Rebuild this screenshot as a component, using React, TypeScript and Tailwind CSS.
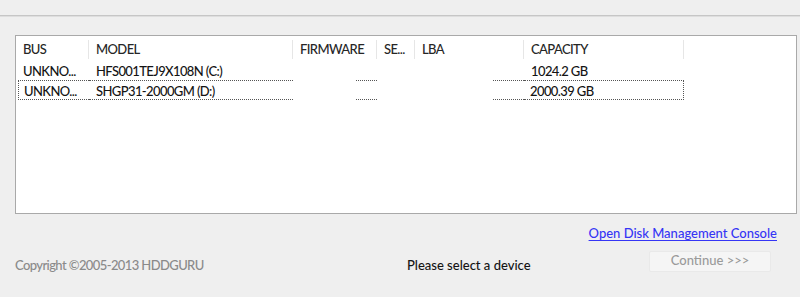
import React from "react";

const cols = [
  { name: "BUS", w: 73 },
  { name: "MODEL", w: 204 },
  { name: "FIRMWARE", w: 84 },
  { name: "SE...", w: 38 },
  { name: "LBA", w: 109 },
  { name: "CAPACITY", w: 160 },
];

export default function App() {
  return (
    <div
      className="w-[800px] h-[297px] bg-[#efefef] overflow-hidden text-[13px] font-medium text-[#141414]"
      style={{ fontFamily: "Lato, 'Open Sans', sans-serif" }}
    >
      <div className="h-[15px]" />
      <div className="h-px bg-[#c6c6c6]" />
      <div className="h-px bg-[#dedede]" />
      <div className="pt-[18px] pl-[15px] pr-[3px]">
        <div className="h-[179px] bg-white border border-[#a9a9a9] flex flex-col tracking-[-0.6px]">
          {/* header */}
          <div className="flex h-[23px] pt-[4px]">
            {cols.map((c) => (
              <div
                key={c.name}
                style={{ width: c.w }}
                className="shrink-0 border-r border-[#e6e6e6] pl-[7px] flex items-center text-[#262626] whitespace-nowrap"
              >
                {c.name}
              </div>
            ))}
          </div>
          {/* row 1 */}
          <div className="flex h-[21px] items-center pt-[4px]">
            <div className="w-[73px] shrink-0 pl-[7px]">UNKNO...</div>
            <div className="w-[204px] shrink-0 pl-[7px]">HFS001TEJ9X108N (C:)</div>
            <div className="w-[84px] shrink-0" />
            <div className="w-[38px] shrink-0" />
            <div className="w-[109px] shrink-0" />
            <div className="w-[160px] shrink-0 pl-[7px]">1024.2 GB</div>
          </div>
          {/* row 2 */}
          <div className="flex h-[20px]">
            <div className="w-[73px] shrink-0 pl-[2px]">
              <div className="h-full border-y border-l border-dotted border-[#555] pl-[5px] pt-[3px] flex items-center">
                UNKNO...
              </div>
            </div>
            <div className="w-[204px] shrink-0 border-y border-dotted border-[#555] pl-[7px] pt-[3px] flex items-center">
              SHGP31-2000GM (D:)
            </div>
            <div className="w-[84px] shrink-0 flex justify-end">
              <div className="w-[21px] h-full border-y border-dotted border-[#555]" />
            </div>
            <div className="w-[38px] shrink-0" />
            <div className="w-[109px] shrink-0 flex justify-end">
              <div className="w-[31px] h-full border-y border-dotted border-[#555]" />
            </div>
            <div className="w-[160px] shrink-0 border-y border-r border-dotted border-[#555] pl-[6px] pt-[3px] flex items-center">
              2000.39 GB
            </div>
          </div>
        </div>
      </div>
      <div className="flex justify-end pr-[23px] pt-[11px] h-[28px]">
        <span className="text-[#3535f5] underline underline-offset-2 leading-[16px]">
          Open Disk Management Console
        </span>
      </div>
      <div className="flex items-center h-[22px] mt-[8px]">
        <div className="w-[392px] shrink-0 ml-[15px] pt-[9px] text-[#8a8a8a] tracking-[-0.6px]">
          Copyright ©2005-2013 HDDGURU
        </div>
        <div className="w-[242px] shrink-0 pt-[9px] text-[#141414]">Please select a device</div>
        <div className="w-[122px] h-[21px] shrink-0 bg-[#f5f5f5] border border-[#e9e9e9] rounded-[2px] flex items-center justify-center text-[#9a9a9a]">
          Continue &gt;&gt;&gt;
        </div>
      </div>
    </div>
  );
}
